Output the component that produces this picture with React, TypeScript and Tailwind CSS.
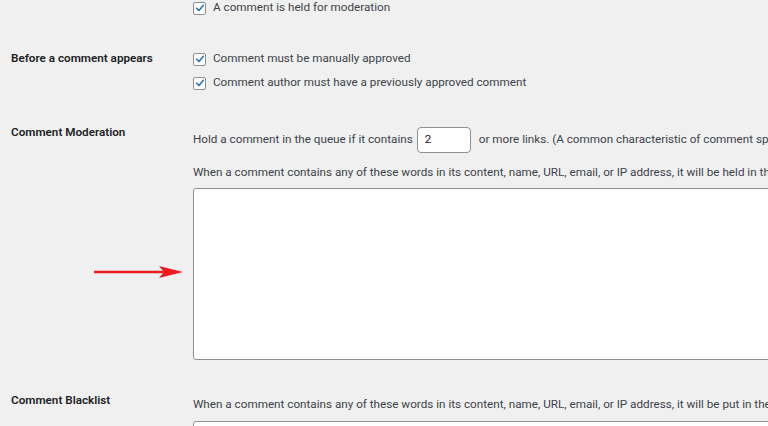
import React from "react";

function Check({ label }: { label: string }) {
  return (
    <label className="flex items-center h-[24px] gap-[7px]">
      <span className="w-[13px] h-[13px] rounded-[2px] border border-[#8c8f94] bg-white flex items-center justify-center shrink-0">
        <svg viewBox="0 0 12 12" className="w-[10px] h-[10px]">
          <path d="M2 6.2 L4.8 9 L10 2.8" fill="none" stroke="#2271b1" strokeWidth="1.8" strokeLinecap="round" strokeLinejoin="round" />
        </svg>
      </span>
      <span>{label}</span>
    </label>
  );
}

function Arrow() {
  return (
    <svg width="92" height="14" viewBox="0 0 92 14" className="block">
      <line x1="1" y1="7" x2="72" y2="7" stroke="#ee1c1c" strokeWidth="2.5" />
      <path d="M66 1 L90 7 L66 13 L71 7 Z" fill="#ee1c1c" />
    </svg>
  );
}

export default function App() {
  return (
    <div
      className="w-[768px] h-[426px] overflow-hidden bg-[#f0f0f0] text-[11.7px] text-[#3c434a] whitespace-nowrap"
      style={{ fontFamily: 'Roboto, "Noto Sans", sans-serif' }}
    >
      {/* held for moderation row */}
      <div className="flex">
        <div className="w-[193px] shrink-0" />
        <div className="-mt-[4px]">
          <Check label="A comment is held for moderation" />
        </div>
      </div>

      {/* Before a comment appears */}
      <div className="flex mt-[27px]">
        <div className="w-[193px] shrink-0 pl-[11px] font-semibold text-[#1d2327] h-[24px] flex items-center">
          Before a comment appears
        </div>
        <div className="flex flex-col">
          <Check label="Comment must be manually approved" />
          <Check label="Comment author must have a previously approved comment" />
        </div>
      </div>

      {/* Comment Moderation */}
      <div className="flex mt-[25px]">
        <div className="w-[193px] shrink-0 pl-[11px] font-semibold text-[#1d2327] flex flex-col">
          <span className="leading-[18px] mt-[3px]">Comment Moderation</span>
          <div className="mt-[124px] pl-[82px]">
            <Arrow />
          </div>
        </div>
        <div className="flex flex-col flex-1 min-w-0">
          <div className="flex items-center h-[26px] mt-[7px]">
            <span>Hold a comment in the queue if it contains</span>
            <span className="ml-[4px] w-[54px] h-[26px] shrink-0 rounded-[4px] border border-[#8c8f94] bg-white text-[#1d2327] flex items-center px-[7px]">
              2
            </span>
            <span className="ml-[8px]">or more links. (A common characteristic of comment spam is a large number of hyperlinks.)</span>
          </div>
          <div className="mt-[10px] h-[20px] flex items-center">
            When a comment contains any of these words in its content, name, URL, email, or IP address, it will be held in the moderation queue.
          </div>
          <div className="mt-[5px] h-[172px] w-[600px] shrink-0 bg-white border border-[#8c8f94] rounded-[3px]" />
        </div>
      </div>

      {/* Comment Blacklist */}
      <div className="flex mt-[31px]">
        <div className="w-[193px] shrink-0 pl-[11px] font-semibold text-[#1d2327] leading-[18px]">
          Comment Blacklist
        </div>
        <div className="flex flex-col flex-1 min-w-0">
          <div className="mt-[4px] h-[20px] flex items-center">
            When a comment contains any of these words in its content, name, URL, email, or IP address, it will be put in the trash.
          </div>
          <div className="mt-[6px] h-[100px] w-[600px] shrink-0 bg-white border border-[#8c8f94] rounded-[3px]" />
        </div>
      </div>
    </div>
  );
}
